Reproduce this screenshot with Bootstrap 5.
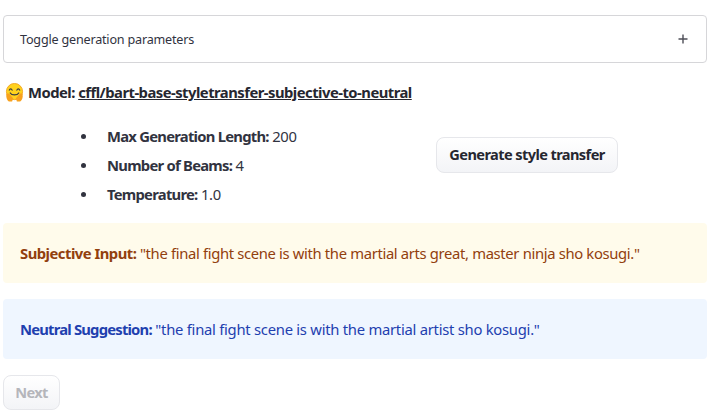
<!doctype html>
<html lang="en">
<head>
<meta charset="utf-8">
<title>Style transfer</title>
<link rel="stylesheet" href="https://cdn.jsdelivr.net/npm/bootstrap@5.3.0/dist/css/bootstrap.min.css">
<style>
html,body{background:#fff;overflow:hidden}
body{font-family:"Noto Sans","Open Sans",sans-serif;font-size:14.8px;letter-spacing:-.34px;color:#31333f;line-height:24px}
strong{letter-spacing:-.5px}
.page-wrap{padding:15px 11px 0 3px;width:718px}
.toggle-box{height:48px;border:1px solid #d6d6d9;border-radius:4px;padding:1px 16px 0;font-size:12.6px;letter-spacing:-.2px}
.plus-icon{width:12px;height:12px;margin:-1px 1px 0 0}
.model-line{margin-top:17px;height:24px;font-weight:700;color:#262730;letter-spacing:-.52px}
.model-line a{color:#262730}
.hug-icon{width:19px;height:19px;margin:0 4px 0 2px;flex:none}
.param-row{margin-top:18px;height:87px}
.param-col{width:433px;flex:none}
.param-list{margin:0;padding:0 0 0 78px;list-style:none}
.param-item{height:29px;line-height:29px;display:flex;align-items:center}
.param-item strong{letter-spacing:-.75px}
.param-item::before{content:"";width:5px;height:5px;border-radius:50%;background:#31333f;margin-right:21px;flex:none}
.gen-btn,.next-btn,.next-btn:disabled{background:linear-gradient(#fff,#f3f4f7);border:1px solid #e6e7eb;border-radius:8px;font-weight:700;color:#262730;font-size:14.6px;letter-spacing:-.6px;padding:0}
.gen-btn{width:182px;height:36px;margin-top:15px}
.next-btn,.next-btn:disabled{width:57px;height:35px;color:#b5b6bb;margin-top:16px;opacity:1}
.note-box{height:60px;border-radius:4px;padding:0 17px;margin-top:16px}
.note-warm{background:#fffbeb;color:#92400e;margin-top:14px}
.note-cool{background:#eff6ff;color:#1e40af;letter-spacing:-.26px}
.note-cool strong{letter-spacing:-.8px}
</style>
</head>
<body>
<main class="page-wrap">
  <div class="toggle-box d-flex align-items-center justify-content-between">
    <span>Toggle generation parameters</span>
    <svg class="plus-icon" viewBox="0 0 12 12" aria-hidden="true"><path d="M6 1.500v9M1.500 6h9" stroke="#4d4e57" stroke-width="1.400" fill="none"/></svg>
  </div>
  <div class="model-line d-flex align-items-center">
    <svg class="hug-icon" viewBox="0 0 20 20" aria-hidden="true">
      <circle cx="10" cy="9" r="8.500" fill="#ffd21e" stroke="#f2a51f" stroke-width="1"/>
      <path d="M4.500 7.500c.6-1.800 2.400-1.800 3 0M12.500 7.500c.6-1.800 2.400-1.800 3 0" stroke="#3a3b45" stroke-width="1.200" fill="none" stroke-linecap="round"/>
      <path d="M5.500 10.500c1.500 2.800 7.500 2.800 9 0" stroke="#3a3b45" stroke-width="1.300" fill="none" stroke-linecap="round"/>
      <path d="M1.500 11.500c1.500-1 3-.5 4 1l3 3.500-1 3.500H4C2 18 .8 14 1.500 11.500zM18.500 11.500c-1.500-1-3-.5-4 1l-3 3.500 1 3.500H16c2-1.500 3.200-5 2.500-7.500z" fill="#f8a11d"/>
    </svg>
    <span>Model:&nbsp;<a href="#">cffl/bart-base-styletransfer-subjective-to-neutral</a></span>
  </div>
  <div class="param-row d-flex">
    <div class="param-col">
      <ul class="param-list">
        <li class="param-item"><span><strong>Max Generation Length:</strong> 200</span></li>
        <li class="param-item"><span><strong>Number of Beams:</strong> 4</span></li>
        <li class="param-item"><span><strong>Temperature:</strong> 1.0</span></li>
      </ul>
    </div>
    <div><button type="button" class="btn gen-btn">Generate style transfer</button></div>
  </div>
  <div class="note-box note-warm d-flex align-items-center"><span><strong>Subjective Input:</strong> "the final fight scene is with the martial arts great, master ninja sho kosugi."</span></div>
  <div class="note-box note-cool d-flex align-items-center"><span><strong>Neutral Suggestion:</strong> "the final fight scene is with the martial artist sho kosugi."</span></div>
  <button type="button" class="btn next-btn d-block" disabled>Next</button>
</main>
<script src="https://cdn.jsdelivr.net/npm/bootstrap@5.3.0/dist/js/bootstrap.bundle.min.js"></script>
</body>
</html>
